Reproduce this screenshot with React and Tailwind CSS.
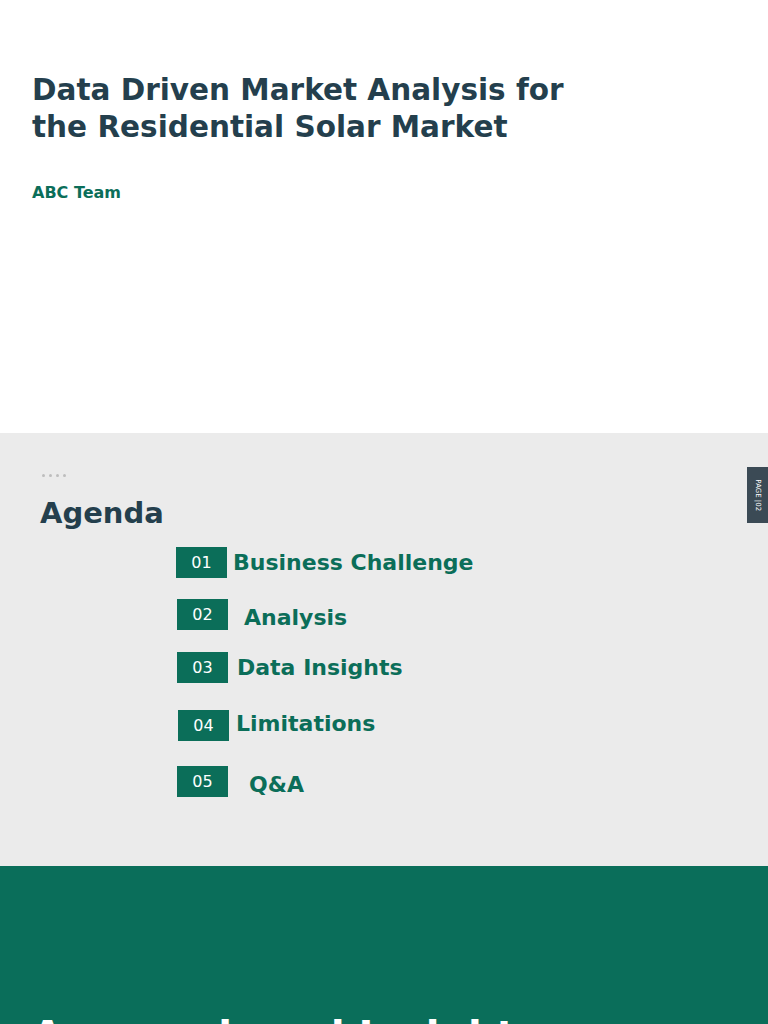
export default function App() {
  const items = [
    { n: "01", t: "Business Challenge", bx: "ml-[176px]", tx: "ml-[6px]", mt: "mt-[15px]" },
    { n: "02", t: "Analysis", bx: "ml-[177px]", tx: "ml-[16px]", mt: "mt-[21px]" },
    { n: "03", t: "Data Insights", bx: "ml-[177px]", tx: "ml-[9px]", mt: "mt-[22px]" },
    { n: "04", t: "Limitations", bx: "ml-[178px]", tx: "ml-[7px]", mt: "mt-[27px]" },
    { n: "05", t: "Q&A", bx: "ml-[177px]", tx: "ml-[21px]", mt: "mt-[25px]" },
  ];
  return (
    <div className="w-[768px] h-[1024px] overflow-hidden" style={{ fontFamily: '"DejaVu Sans", sans-serif' }}>
      <div className="h-[433px] bg-white pt-[72px] px-[32px]">
        <h1 className="text-[29.5px] leading-[37px] font-bold text-[#243f4d]">
          Data Driven Market Analysis for<br />the Residential Solar Market
        </h1>
        <div className="mt-[35px] text-[16px] font-bold text-[#0b6e59]">ABC Team</div>
      </div>
      <div className="relative h-[433px] bg-[#ebebeb]">
        <div className="flex gap-[4px] pl-[42px] pt-[41px]">
          {[0, 1, 2, 3].map((i) => (
            <div key={i} className="w-[3px] h-[3px] rounded-full bg-[#bdbdbd]" />
          ))}
        </div>
        <h2 className="pl-[40px] mt-[18px] text-[29px] leading-[36px] font-bold text-[#243f4d]">Agenda</h2>
        <div className="absolute right-0 top-[34px] w-[21px] h-[56px] bg-[#3b4a55] flex items-center justify-center">
          <span className="text-[7px] text-white whitespace-nowrap rotate-90">PAGE |02</span>
        </div>
        <div className="flex flex-col">
          {items.map((it, i) => (
            <div key={i} className={`flex items-center ${i === 0 ? "mt-[16px]" : it.mt}`}>
              <div className={`${it.bx} w-[51px] h-[31px] bg-[#0b6e59] text-white text-[16px] flex items-center justify-center`}>{it.n}</div>
              <div className={`${it.tx} text-[22px] leading-[28px] font-bold text-[#0b6e59] ${i === 1 || i === 4 ? "translate-y-[3px]" : i === 3 ? "-translate-y-[2px]" : ""}`}>{it.t}</div>
            </div>
          ))}
        </div>
      </div>
      <div className="h-[158px] bg-[#0a6e5a] pt-[146px] pl-[32px]">
        <div className="text-[40px] font-bold text-white leading-[48px]">Approach and Insights</div>
      </div>
    </div>
  );
}
